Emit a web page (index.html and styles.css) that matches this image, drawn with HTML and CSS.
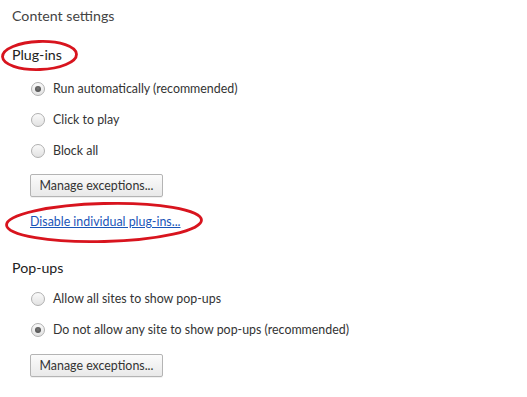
FILE: index.html
```html
<!DOCTYPE html>
<html>
<head>
<meta charset="utf-8">
<link rel="stylesheet" href="styles.css">
</head>
<body>
<div class="page">
  <div class="title">Content settings</div>

  <div class="heading">Plug-ins</div>
  <div class="options">
    <div class="row"><span class="radio checked"></span><span class="label">Run automatically (recommended)</span></div>
    <div class="row"><span class="radio"></span><span class="label">Click to play</span></div>
    <div class="row"><span class="radio"></span><span class="label">Block all</span></div>
  </div>
  <div class="btn-wrap first"><button class="btn">Manage exceptions...</button></div>
  <div class="link-row"><a class="link" href="#">Disable individual plug-ins...</a></div>

  <div class="heading second">Pop-ups</div>
  <div class="options">
    <div class="row"><span class="radio"></span><span class="label">Allow all sites to show pop-ups</span></div>
    <div class="row"><span class="radio checked"></span><span class="label">Do not allow any site to show pop-ups (recommended)</span></div>
  </div>
  <div class="btn-wrap last"><button class="btn">Manage exceptions...</button></div>

  <svg class="marks" width="527" height="397" viewBox="0 0 527 397">
    <ellipse cx="39.5" cy="55.5" rx="37" ry="14" transform="rotate(-2 39.5 55.5)"/>
    <ellipse cx="104" cy="222.5" rx="97.5" ry="19" transform="rotate(-1.5 104 222.5)"/>
  </svg>
</div>
</body>
</html>
```

FILE: styles.css
```css
html, body {
  margin: 0;
  padding: 0;
  background: #fff;
}
.page {
  position: relative;
  width: 527px;
  height: 397px;
  overflow: hidden;
  font-family: Lato, "Liberation Sans", sans-serif;
  font-size: 12.4px;
  color: #333;
}
.title {
  padding-left: 12px;
  line-height: 32px;
  font-size: 14.2px;
  color: #444;
}
.heading {
  margin-top: 8px;
  padding-left: 12px;
  line-height: 30px;
  font-size: 14.2px;
  color: #222;
}
.heading.second {
  margin-top: 21px;
}
.options {
  margin-top: 3px;
  padding-left: 31px;
}
.heading.second + .options {
  margin-top: 0;
}
.row {
  height: 31px;
  display: flex;
  align-items: center;
}
.radio {
  width: 12px;
  height: 12px;
  border: 1px solid #b0b0b0;
  border-radius: 50%;
  background: linear-gradient(#fafafa, #e2e2e2);
  display: flex;
  align-items: center;
  justify-content: center;
  flex: none;
}
.radio.checked::after {
  content: "";
  width: 6px;
  height: 6px;
  border-radius: 50%;
  background: radial-gradient(circle at 50% 40%, #777, #444);
}
.label {
  margin-left: 8px;
}
.btn-wrap {
  padding-left: 30px;
}
.btn-wrap.first {
  margin-top: 8px;
}
.btn-wrap.last {
  margin-top: 9px;
}
.btn {
  width: 133px;
  height: 23px;
  padding: 0;
  border: 1px solid #b4b4b4;
  border-radius: 2px;
  background: linear-gradient(#fbfbfb, #e9e9e9);
  font-family: Lato, "Liberation Sans", sans-serif;
  font-size: 12.4px;
  color: #333;
  box-shadow: 0 1px 0 rgba(0,0,0,0.06);
}
.link-row {
  margin-top: 15px;
  padding-left: 30px;
  line-height: 20px;
}
.link {
  color: #1a55b8;
  text-decoration: underline;
}
.marks {
  position: absolute;
  left: 0;
  top: 0;
  pointer-events: none;
}
.marks ellipse {
  fill: none;
  stroke: #d8141e;
  stroke-width: 2.8;
}
```
